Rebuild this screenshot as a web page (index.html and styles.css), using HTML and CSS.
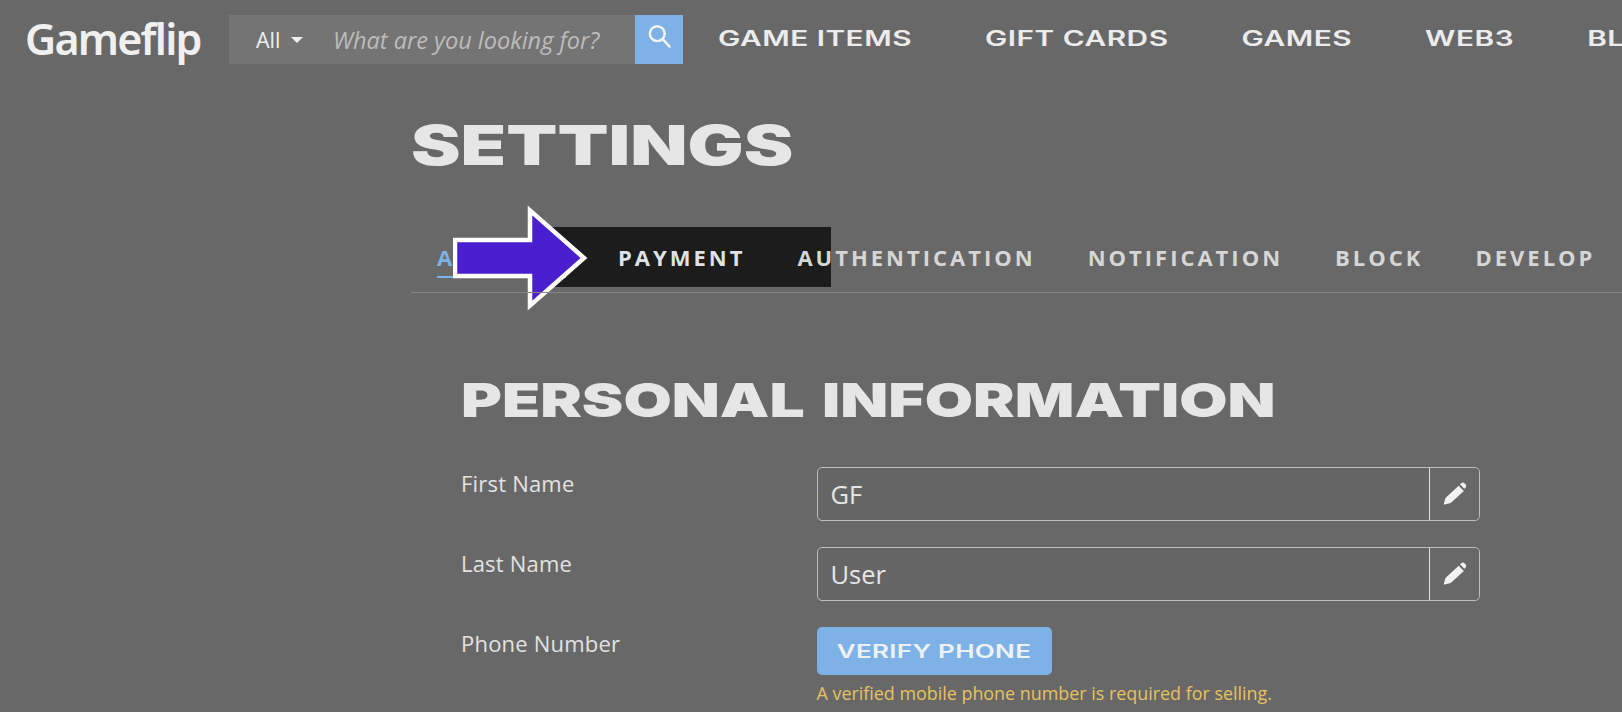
FILE: index.html
```html
<!DOCTYPE html>
<html lang="en">
<head>
<meta charset="utf-8">
<title>Gameflip Settings</title>
<link rel="stylesheet" href="styles.css">
</head>
<body>
<header class="topbar">
  <a class="logo">Gameflip</a>
  <form class="search">
    <span class="search-cat">All<i class="caret"></i></span>
    <span class="search-input">What are you looking for?</span>
    <span class="search-btn">
      <svg width="27" height="27" viewBox="0 0 24 24" fill="none" stroke="#f2f5f8" stroke-width="2.2" stroke-linecap="round"><circle cx="10" cy="9.5" r="6.6"/><path d="M15 14.5l6 6.5"/></svg>
    </span>
  </form>
  <nav class="mainnav">
    <a class="wide">GAME ITEMS</a>
    <a class="wide">GIFT CARDS</a>
    <a class="wide">GAMES</a>
    <a class="wide">WEB3</a>
    <a class="wide">BLOG</a>
  </nav>
</header>
<main class="content">
  <h1 class="page-title">SETTINGS</h1>
  <div class="tabs">
    <div class="tab-highlight"></div>
    <a class="tab active">ACCOUNT</a>
    <a class="tab">PAYMENT</a>
    <a class="tab">AUTHENTICATION</a>
    <a class="tab">NOTIFICATION</a>
    <a class="tab">BLOCK</a>
    <a class="tab">DEVELOP</a>
    <svg class="arrow" width="140" height="108" viewBox="0 0 140 108"><path d="M2 36H77V6.4L131 54 77 101.6V72H2Z" fill="#4a1fd0" stroke="#fff" stroke-width="4.5"/></svg>
  </div>
  <section class="panel">
    <h2 class="section-title">PERSONAL INFORMATION</h2>
    <div class="form">
      <label class="field-label">First Name</label>
      <div class="input-group">
        <span class="input-value">GF</span>
        <span class="edit-btn"><svg width="26" height="26" viewBox="0 0 24 24" fill="#f2f2f2"><path d="M2.5 21.8c-.5.2-.9-.2-.8-.7l1.5-5.3L15.4 4.3l4.8 4.9L8 20.4z"/><path d="M16.6 3.1l1.2-1.1c.8-.7 2-.7 2.8 0l1.1 1.1c.8.8.8 2 .1 2.8L20.6 7.2z"/></svg></span>
      </div>
      <label class="field-label">Last Name</label>
      <div class="input-group">
        <span class="input-value">User</span>
        <span class="edit-btn"><svg width="26" height="26" viewBox="0 0 24 24" fill="#f2f2f2"><path d="M2.5 21.8c-.5.2-.9-.2-.8-.7l1.5-5.3L15.4 4.3l4.8 4.9L8 20.4z"/><path d="M16.6 3.1l1.2-1.1c.8-.7 2-.7 2.8 0l1.1 1.1c.8.8.8 2 .1 2.8L20.6 7.2z"/></svg></span>
      </div>
      <label class="field-label">Phone Number</label>
      <div class="phone-cell">
        <a class="verify-btn"><span class="wide-small">VERIFY PHONE</span></a>
        <p class="hint">A verified mobile phone number is required for selling.</p>
      </div>
    </div>
  </section>
</main>
</body>
</html>
```
FILE: styles.css
```css
* { box-sizing: border-box; }
html, body { margin: 0; height: 712px; overflow: hidden; }
body {
  width: 1622px;
  background: #686868;
  color: #e6e6e6;
  font-family: "Open Sans", sans-serif;
}
.topbar {
  display: flex;
  align-items: flex-start;
  height: 105px;
  padding: 15px 0 0 25px;
  white-space: nowrap;
  overflow: hidden;
}
.logo {
  width: 204px;
  flex: none;
  font-family: "Noto Sans", sans-serif;
  font-weight: 600;
  font-size: 43px;
  line-height: 48px;
  letter-spacing: -1.8px;
  color: #f0f0f0;
}
.search {
  display: flex;
  flex: none;
  width: 454px;
  height: 49px;
  background: #747474;
  align-items: center;
}
.search-cat {
  display: flex;
  align-items: center;
  width: 104px;
  padding-left: 27px;
  font-size: 21.5px;
  color: #f0f0f0;
}
.caret {
  margin-left: 11px;
  border: 6px solid transparent;
  border-top-color: #f0f0f0;
  border-bottom: 0;
}
.search-input {
  flex: 1;
  font-size: 23.5px;
  font-style: italic;
  color: #bcbcbc;
}
.search-btn {
  display: flex;
  align-items: center;
  justify-content: center;
  width: 48px;
  height: 49px;
  padding-bottom: 7px;
  background: #7eb1e5;
}
.mainnav {
  display: flex;
  flex: none;
  gap: 73px;
  margin-left: 35px;
  height: 46px;
  align-items: center;
}
.wide {
  display: inline-block;
  font-family: Inter, sans-serif;
  font-weight: 600;
  font-size: 29.8px;
  line-height: 46px;
  letter-spacing: 0.5px;
  color: #ececec;
  transform: scaleY(0.7);
}
.content {
  padding-left: 411px;
}
.page-title {
  margin: 0;
  font-family: Inter, sans-serif;
  font-weight: 900;
  font-size: 74.5px;
  line-height: 80px;
  color: #e6e6e6;
  transform: scaleY(0.73);
}
.tabs {
  position: relative;
  display: flex;
  gap: 52px;
  align-items: flex-start;
  height: 116px;
  margin-top: 11px;
  padding: 39px 0 0 26px;
}
.tabs::after {
  content: "";
  position: absolute;
  left: 0;
  right: 0;
  top: 96px;
  height: 1px;
  background: #858585;
}
.tab-highlight {
  position: absolute;
  left: 141px;
  top: 31px;
  width: 279px;
  height: 60px;
  background: #1c1c1c;
}
.tab {
  position: relative;
  flex: none;
  height: 43px;
  font-weight: 700;
  font-size: 22px;
  line-height: 44px;
  letter-spacing: 3px;
  color: #d6d6d6;
}
.tab:nth-of-type(2) { color: #dfe3e8; }
.tab.active {
  color: #7eb1e5;
  border-bottom: 2px solid #7eb1e5;
}
.arrow {
  position: absolute;
  left: 42px;
  top: 8px;
}
.panel {
  padding: 54px 0 0 50px;
}
.section-title {
  margin: 0;
  font-family: Inter, sans-serif;
  font-weight: 900;
  font-size: 62.4px;
  line-height: 68px;
  word-spacing: 5px;
  color: #e6e6e6;
  transform: scaleY(0.76);
  transform-origin: left center;
  white-space: nowrap;
}
.form {
  display: grid;
  grid-template-columns: 355.5px 663.5px;
  row-gap: 26px;
  margin-top: 33px;
}
.field-label {
  font-size: 22px;
  line-height: 33px;
  letter-spacing: 0.2px;
  color: #e2e2e2;
}
.input-group {
  display: flex;
  height: 54px;
  border: 1.5px solid #bdbdbd;
  border-radius: 5px;
  background: #656565;
}
.input-value {
  flex: 1;
  padding-left: 13px;
  font-size: 25.5px;
  line-height: 53px;
  color: #e6e6e6;
}
.edit-btn {
  display: flex;
  width: 50px;
  align-items: center;
  justify-content: center;
  border-left: 1.5px solid #e0e0e0;
  background: #686868;
  border-radius: 0 5px 5px 0;
}
.verify-btn {
  display: flex;
  align-items: center;
  justify-content: center;
  width: 235px;
  height: 48px;
  border-radius: 5px;
  background: #7eb1e5;
}
.wide-small {
  display: inline-block;
  font-family: Inter, sans-serif;
  font-weight: 600;
  font-size: 26px;
  letter-spacing: 0.3px;
  color: #eef2f6;
  transform: scaleY(0.72);
}
.hint {
  margin: 6px 0 0;
  font-size: 17.9px;
  line-height: 24px;
  color: #e6c35f;
  white-space: nowrap;
}
```
